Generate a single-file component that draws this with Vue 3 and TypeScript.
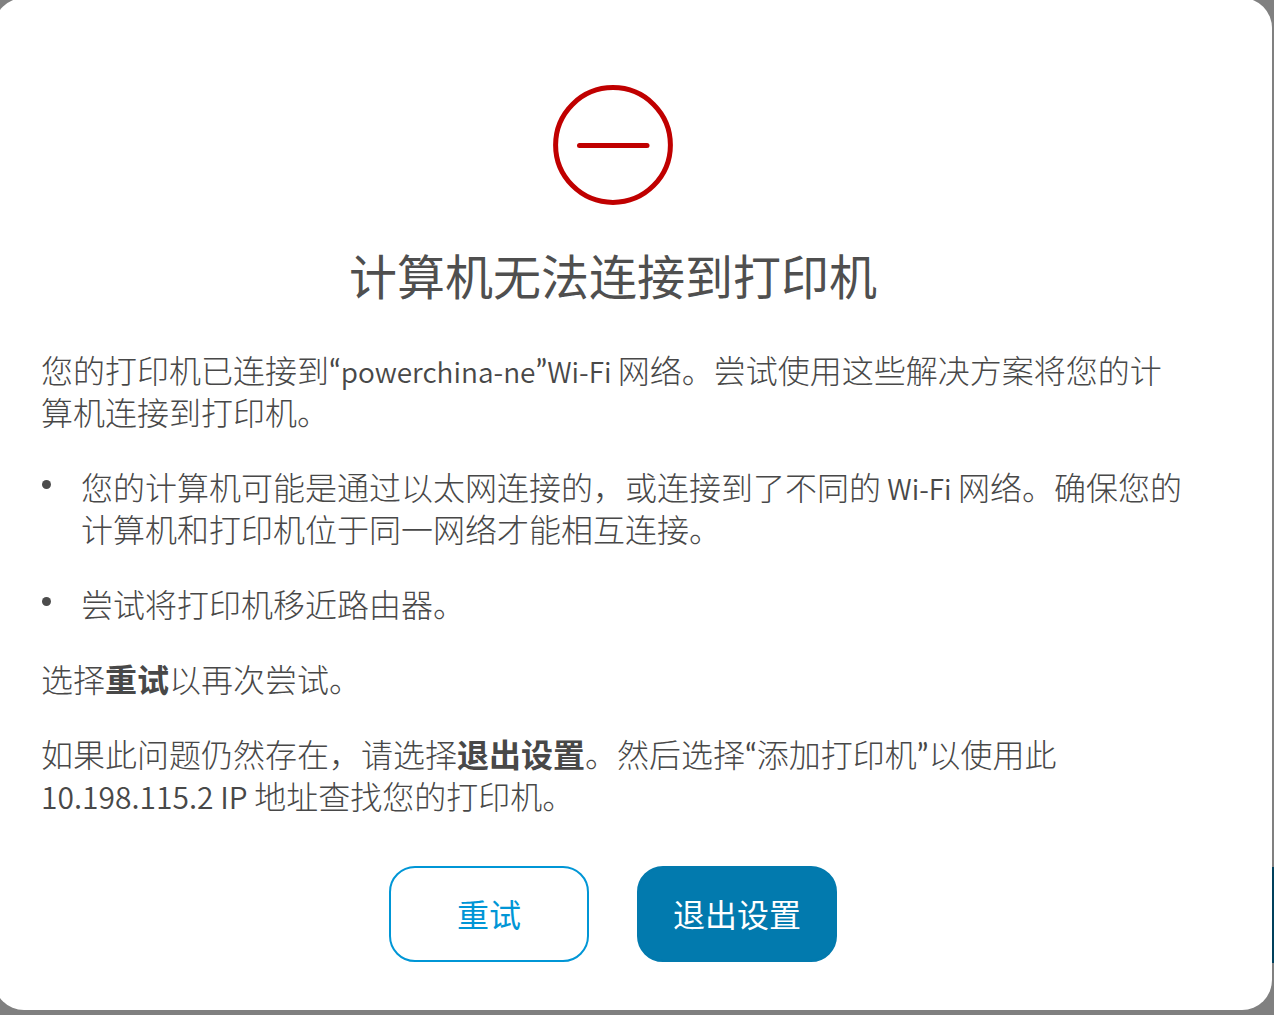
<script setup lang="ts">
const network = 'powerchina-ne'
const address = '10.198.115.2'
</script>

<template>
  <div class="backdrop">
    <span class="underlay" aria-hidden="true"></span>
    <main class="dialog" role="dialog" aria-labelledby="dialog-title">
      <svg class="icon" viewBox="0 0 120 120" aria-hidden="true">
        <circle cx="60" cy="60" r="57.4" />
        <path d="M26.5 60.5H94" />
      </svg>
      <h1 id="dialog-title">计算机无法连接到打印机</h1>
      <div class="body">
        <p>您的打印机已连接到<span class="quote">“</span><span class="latin">{{ network }}</span><span class="quote">”</span><span class="latin">Wi-Fi </span>网络。尝试使用这些解决方案将您的计算机连接到打印机。</p>
        <ul>
          <li>您的计算机可能是通过以太网连接的，或连接到了不同的<span class="latin"> Wi-Fi </span>网络。确保您的计算机和打印机位于同一网络才能相互连接。</li>
          <li>尝试将打印机移近路由器。</li>
        </ul>
        <p>选择<strong>重试</strong>以再次尝试。</p>
        <p>如果此问题仍然存在，请选择<strong>退出设置</strong>。然后选择<span class="quote">“</span>添加打印机<span class="quote">”</span>以使用此 <span class="latin address">{{ address }} IP </span>地址查找您的打印机。</p>
      </div>
      <div class="actions">
        <button type="button" class="secondary">重试</button>
        <button type="button" class="primary">退出设置</button>
      </div>
    </main>
  </div>
</template>

<style>
body {
  margin: 0;
  background: #808080;
}
</style>

<style scoped>
.backdrop {
  position: relative;
  overflow: hidden;
  padding-bottom: 5px;
  background: #808080;
}

.underlay {
  position: absolute;
  right: 0;
  bottom: 52px;
  width: 8px;
  height: 96px;
  background: #00405c;
}

.dialog {
  position: relative;
  box-sizing: border-box;
  margin: -2px 2px 0 -6px;
  padding: 87px 87px 48px 47px;
  border-radius: 30px;
  background: #fff;
  color: #484848;
  font-family: Lato, "Noto Sans CJK SC", sans-serif;
  font-weight: 300;
}

.icon {
  display: block;
  width: 120px;
  height: 120px;
  margin: 0 auto;
  fill: none;
  stroke: #c00000;
  stroke-width: 5;
  stroke-linecap: round;
}

h1 {
  margin: 40px 0 0;
  color: #4f4f4f;
  font-size: 48px;
  line-height: 64px;
  font-weight: 400;
  text-align: center;
}

.body {
  margin-top: 41px;
  font-size: 32px;
  line-height: 42px;
}

.latin {
  font-family: "Noto Sans CJK SC", sans-serif;
  font-size: 28px;
  font-weight: 350;
  line-height: 28px;
}

.address {
  font-size: 30px;
}

.quote {
  font-weight: 400;
}

p,
ul,
li {
  margin: 0 0 33px;
}

ul {
  padding: 0;
  list-style: none;
}

li {
  position: relative;
  padding-left: 40px;
}

li::before {
  content: "";
  position: absolute;
  top: 13px;
  left: 1px;
  width: 9px;
  height: 9px;
  border-radius: 50%;
  background: #4c4c4c;
}

strong {
  font-weight: 700;
}

.actions {
  display: flex;
  justify-content: center;
  gap: 48px;
  margin-top: 48px;
}

button {
  box-sizing: border-box;
  width: 200px;
  height: 96px;
  padding: 0 0 2px;
  border: 2px solid #0096d6;
  border-radius: 26px;
  font-family: inherit;
  font-size: 32px;
  font-weight: 400;
}

.secondary {
  background: #fff;
  color: #0096d6;
}

.primary {
  border-color: #027aae;
  background: #027aae;
  color: #fff;
}
</style>
